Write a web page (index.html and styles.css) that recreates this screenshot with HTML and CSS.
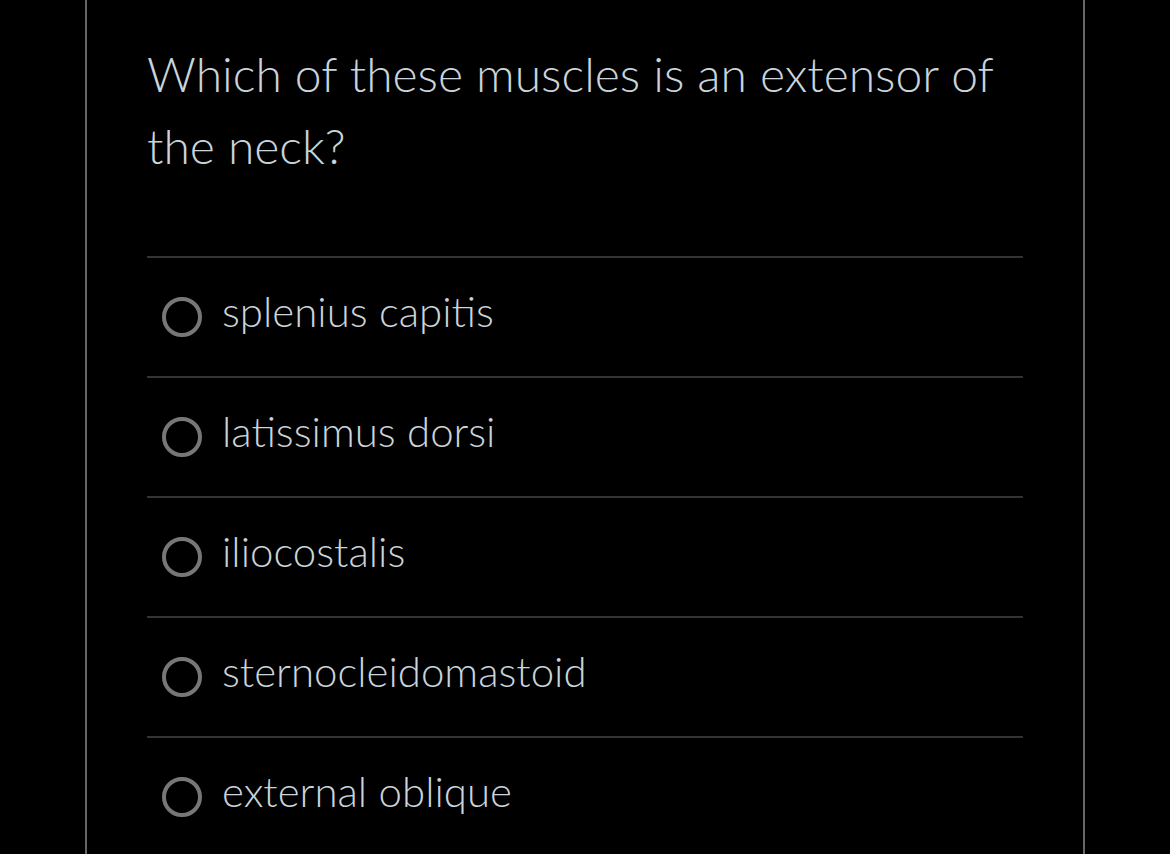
FILE: index.html
```html
<!DOCTYPE html>
<html lang="en">
<head>
    <meta charset="UTF-8">
    <meta name="viewport" content="width=device-width, initial-scale=1.0">
    <title>Quiz</title>
    <link rel="stylesheet" href="styles.css">
</head>
<body>
    <div class="quiz">
        <h1 class="question">Which of these muscles is an extensor of the neck?</h1>
        <ul class="answers">
            <li class="answer"><span class="radio"></span><span class="label">splenius capitis</span></li>
            <li class="answer"><span class="radio"></span><span class="label">latissimus dorsi</span></li>
            <li class="answer"><span class="radio"></span><span class="label">iliocostalis</span></li>
            <li class="answer"><span class="radio"></span><span class="label">sternocleidomastoid</span></li>
            <li class="answer"><span class="radio"></span><span class="label">external oblique</span></li>
        </ul>
    </div>
</body>
</html>
```

FILE: styles.css
```css
html, body {
    margin: 0;
    padding: 0;
    background: #000;
    height: 100%;
    overflow: hidden;
}

body {
    font-family: 'Lato', 'Open Sans', sans-serif;
    color: #c9d4dc;
}

.quiz {
    width: 1000px;
    box-sizing: border-box;
    margin: 0 auto;
    min-height: 100%;
    border-left: 2px solid #666;
    border-right: 2px solid #666;
    padding: 38px 60px 0;
}

.question {
    margin: 0;
    font-size: 48px;
    line-height: 72px;
    font-weight: 300;
}

.answers {
    list-style: none;
    margin: 74px 0 0;
    padding: 0;
}

.answer {
    display: flex;
    align-items: center;
    height: 118px;
    border-top: 2px solid #333;
    padding-left: 15px;
}

.radio {
    width: 40px;
    height: 40px;
    box-sizing: border-box;
    border: 4px solid #777;
    border-radius: 50%;
    flex-shrink: 0;
    margin-right: 20px;
}

.label {
    font-size: 42px;
    line-height: 50px;
    font-weight: 300;
    margin-bottom: 12px;
}
```
